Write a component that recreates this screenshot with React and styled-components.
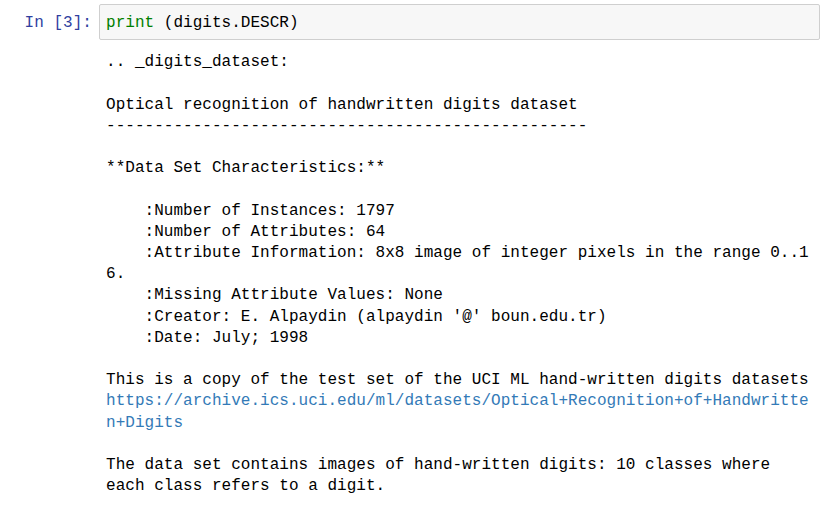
import React from "react";
import styled, { createGlobalStyle } from "styled-components";

const GlobalStyle = createGlobalStyle`
  body {
    margin: 0;
    background: #ffffff;
  }
`;

const Notebook = styled.div`
  padding: 4px 5px 0 0;
  font-family: "Liberation Mono", "DejaVu Sans Mono", monospace;
  font-size: 16px;
  letter-spacing: 0.025px;
  line-height: 21.2px;
  color: #000000;
`;

const Row = styled.div`
  display: grid;
  grid-template-columns: 99px 1fr;
  margin-top: ${(p) => p.gap || 0}px;
`;

const Prompt = styled.div`
  text-align: right;
  padding: 8.5px 7px 0 0;
  color: #303f9f;
`;

const InputArea = styled.div`
  border: 1px solid #cfcfcf;
  border-radius: 2px;
  background: #f7f7f7;
  padding: 7.5px 6px 5.5px;
  white-space: pre;
`;

const Keyword = styled.span`
  color: #008000;
`;

const Output = styled.pre`
  margin: 0;
  padding-left: 7px;
  font: inherit;
  letter-spacing: inherit;
  white-space: pre;
`;

const Link = styled.a`
  color: #337ab7;
  text-decoration: none;
`;

const descr = `.. _digits_dataset:

Optical recognition of handwritten digits dataset
--------------------------------------------------

**Data Set Characteristics:**

    :Number of Instances: 1797
    :Number of Attributes: 64
    :Attribute Information: 8x8 image of integer pixels in the range 0..1
6.
    :Missing Attribute Values: None
    :Creator: E. Alpaydin (alpaydin '@' boun.edu.tr)
    :Date: July; 1998

This is a copy of the test set of the UCI ML hand-written digits datasets
`;

export default function App() {
  return (
    <>
      <GlobalStyle />
      <Notebook>
        <Row>
          <Prompt>In [3]:</Prompt>
          <InputArea>
            <Keyword>print</Keyword> (digits.DESCR)
          </InputArea>
        </Row>
        <Row gap={12}>
          <div />
          <Output>
            {descr}
            <Link>
              {"https://archive.ics.uci.edu/ml/datasets/Optical+Recognition+of+Handwritte\nn+Digits"}
            </Link>
            {"\n\nThe data set contains images of hand-written digits: 10 classes where\neach class refers to a digit."}
          </Output>
        </Row>
      </Notebook>
    </>
  );
}
